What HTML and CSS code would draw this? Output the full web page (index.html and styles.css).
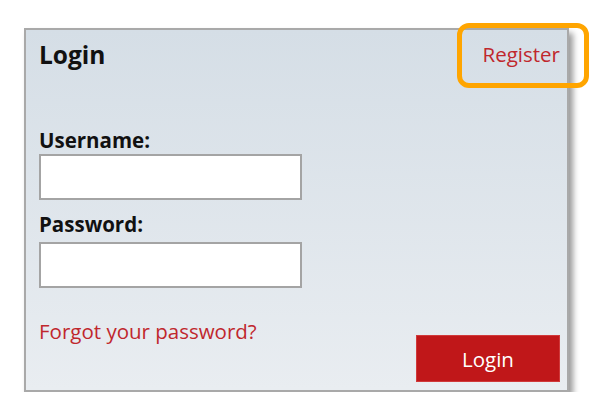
FILE: index.html
```html
<!DOCTYPE html>
<html>
<head>
<meta charset="utf-8">
<link rel="stylesheet" href="styles.css">
</head>
<body>
<div class="page">
  <div class="panel">
    <div class="head">
      <h1 class="title">Login</h1>
      <a class="register" href="#">Register</a>
    </div>
    <div class="field first">
      <label class="label">Username:</label>
      <input class="input" type="text">
    </div>
    <div class="field second">
      <label class="label">Password:</label>
      <input class="input" type="password">
    </div>
    <div class="foot">
      <a class="forgot" href="#">Forgot your password?</a>
      <button class="btn">Login</button>
    </div>
  </div>
</div>
</body>
</html>
```
FILE: styles.css
```css
*, *::before, *::after { box-sizing: border-box; }
html, body { margin: 0; padding: 0; background: #fff; }
body { font-family: "Open Sans", "Liberation Sans", sans-serif; }
.page { padding: 28px 0 0 24px; }
.panel {
  width: 545px;
  height: 364px;
  border: 2px solid #a9a9a9;
  background: linear-gradient(#d5dee6, #e9edf1);
  box-shadow: 4px 5px 6px rgba(0,0,0,0.4);
  padding: 0 7px 8px 13px;
  display: flex;
  flex-direction: column;
}
.head {
  display: flex;
  justify-content: space-between;
  align-items: flex-start;
  height: 97px;
}
.title {
  margin: 9px 0 0 0;
  font-size: 24.5px;
  font-weight: 700;
  color: #111;
  line-height: 32px;
}
.register {
  position: relative;
  margin-top: 10px;
  font-size: 20.5px;
  line-height: 28px;
  color: #c0272d;
  text-decoration: none;
}
.register::after {
  content: "";
  position: absolute;
  left: -26px;
  top: -17px;
  width: 132px;
  height: 65px;
  border: 5px solid #ffa500;
  border-radius: 12px;
}
.field { display: flex; flex-direction: column; }
.second { margin-top: 11px; }
.label {
  font-size: 20.5px;
  font-weight: 700;
  color: #111;
  line-height: 26px;
}
.input {
  width: 263px;
  height: 46px;
  border: 2px solid #a4a4a4;
  background: #fff;
  margin: 1px 0 0 0;
  padding: 0;
}
.second .input { margin-top: 5px; }
.foot {
  margin-top: auto;
  display: flex;
  justify-content: space-between;
  align-items: flex-end;
}
.forgot {
  font-size: 20.5px;
  line-height: 26px;
  color: #c0272d;
  text-decoration: none;
  margin-bottom: 38px;
}
.btn {
  width: 144px;
  height: 47px;
  background: #c01719;
  border: 1px solid #d0393a;
  color: #fff;
  font-family: "Open Sans", "Liberation Sans", sans-serif;
  font-size: 20.5px;
  padding: 0;
}
```
